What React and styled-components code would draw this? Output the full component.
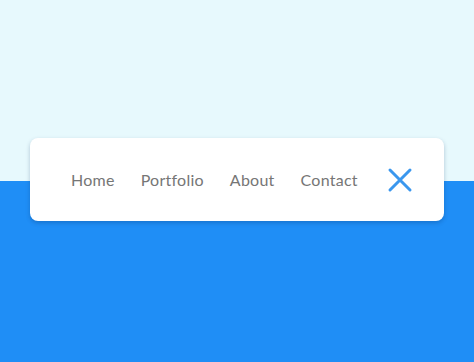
import React from "react";
import styled, { createGlobalStyle } from "styled-components";

const GlobalStyle = createGlobalStyle`
  html, body {
    margin: 0;
    padding: 0;
  }
  body {
    font-family: Lato, "Open Sans", sans-serif;
  }
`;

const Page = styled.div`
  width: 474px;
  height: 362px;
  box-sizing: border-box;
  padding: 138px 30px 0 30px;
  background: linear-gradient(
    to bottom,
    #e7f9fd 0,
    #e7f9fd 181px,
    #1f8ef6 181px,
    #1f8ef6 100%
  );
`;

const NavCard = styled.nav`
  height: 83px;
  box-sizing: border-box;
  background: #ffffff;
  border-radius: 8px;
  box-shadow: 0 2px 4px rgba(0, 40, 90, 0.25);
  display: flex;
  align-items: center;
  padding: 0 31px 0 41px;
`;

const Links = styled.ul`
  list-style-type: none;
  margin: 0;
  padding: 0;
  display: flex;
  align-items: center;
  gap: 26px;
  flex: 1;
`;

const Link = styled.li`
  font-size: 16px;
  letter-spacing: 0.25px;
  color: #767676;
  cursor: pointer;
`;

const CloseButton = styled.button`
  border: none;
  background: none;
  padding: 0;
  width: 26px;
  height: 26px;
  display: flex;
  align-items: center;
  justify-content: center;
  cursor: pointer;
`;

const links = ["Home", "Portfolio", "About", "Contact"];

export default function App() {
  return (
    <Page>
      <GlobalStyle />
      <NavCard>
        <Links>
          {links.map(l => (
            <Link key={l}>{l}</Link>
          ))}
        </Links>
        <CloseButton aria-label="Close menu">
          <svg width="26" height="26" viewBox="0 0 26 26">
            <path
              d="M3 3 L23 23 M23 3 L3 23"
              stroke="#3a97ee"
              strokeWidth="3"
              strokeLinecap="round"
            />
          </svg>
        </CloseButton>
      </NavCard>
    </Page>
  );
}
